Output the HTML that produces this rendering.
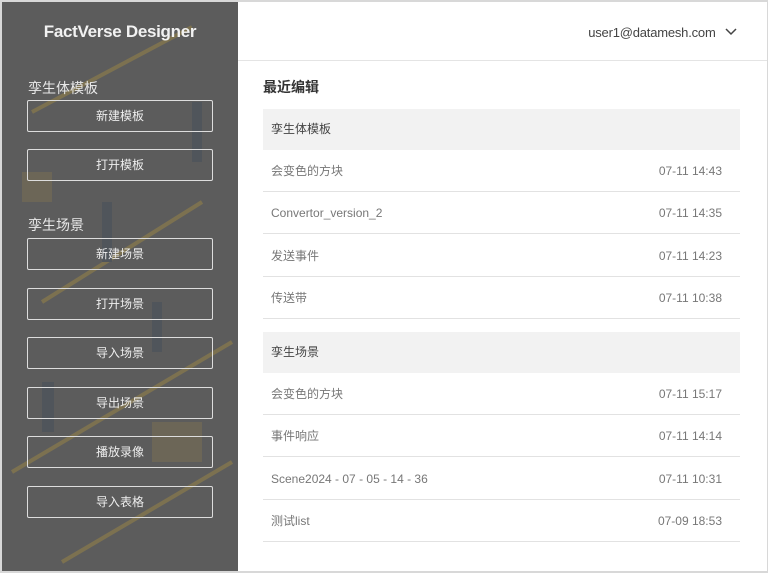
<!DOCTYPE html>
<html><head><meta charset="utf-8"><style>
*{margin:0;padding:0;box-sizing:border-box}
body{width:768px;height:573px;background:#fff;font-family:"Liberation Sans","Noto Sans CJK SC",sans-serif;position:relative;overflow:hidden}
.frame{position:absolute;left:0;top:0;width:768px;height:573px;border:2px solid #d8d8d8;border-right-width:1px}
.side{position:absolute;left:2px;top:2px;width:236px;height:569px;background:#5c5c5c;overflow:hidden}
.side svg{position:absolute;left:0;top:0}
.title{position:absolute;left:0;width:236px;top:20px;text-align:center;color:#f2f2f2;font-size:17px;font-weight:bold;letter-spacing:-0.3px}
.lbl{position:absolute;left:26px;color:#e8e8e8;font-size:14px}
.btn{position:absolute;left:25px;width:186px;height:32px;border:1.5px solid #ddd;border-radius:2px;color:#eee;font-size:12px;text-align:center;line-height:31px}
.top{position:absolute;left:238px;top:2px;right:1px;height:59px;border-bottom:1px solid #e4e4e4}
.user{position:absolute;right:30px;top:23px;font-size:13px;color:#444;letter-spacing:-0.2px}
.h{position:absolute;left:263px;top:77px;font-size:14px;font-weight:bold;color:#333}
.sec{position:absolute;left:263px;width:477px;height:41px;background:#f2f2f2;font-size:12px;color:#444;padding-left:8px;line-height:41px}
.row{position:absolute;left:263px;width:477px;height:42px;border-bottom:1px solid #e2e2e2;font-size:12px;color:#777;line-height:42px;padding:0 18px 0 8px}
.row span{float:right}
</style></head><body>
<div class="frame"></div>
<div class="side">
<svg width="236" height="569" opacity="0.35">
<g fill="none" stroke="#b89a3a" stroke-width="4">
<path d="M30 110 L190 25 M40 300 L200 200 M10 470 L230 340 M60 560 L230 460"/>
</g>
<g fill="#3a4a5a"><rect x="190" y="100" width="10" height="60"/><rect x="100" y="200" width="10" height="60"/><rect x="40" y="380" width="12" height="50"/><rect x="150" y="300" width="10" height="50"/></g>
<g fill="#8a7a50"><rect x="150" y="420" width="50" height="40"/><rect x="20" y="170" width="30" height="30"/></g>
</svg>
<div class="title">FactVerse Designer</div>
<div class="lbl" style="top:76px">孪生体模板</div>
<div class="lbl" style="top:213px">孪生场景</div>
<div class="btn" style="top:98px">新建模板</div>
<div class="btn" style="top:147px">打开模板</div>
<div class="btn" style="top:236px">新建场景</div>
<div class="btn" style="top:286px">打开场景</div>
<div class="btn" style="top:335px">导入场景</div>
<div class="btn" style="top:385px">导出场景</div>
<div class="btn" style="top:434px">播放录像</div>
<div class="btn" style="top:484px">导入表格</div>
</div>
<div class="top"><div class="user">user1@datamesh.com <svg width="12" height="10" style="margin-left:6px" viewBox="0 0 12 10"><path d="M1 2 L6 7 L11 2" fill="none" stroke="#444" stroke-width="1.5"/></svg></div></div>
<div class="h">最近编辑</div>
<div class="sec" style="top:109px">孪生体模板</div>
<div class="row" style="top:150px">会变色的方块<span>07-11 14:43</span></div>
<div class="row" style="top:192px">Convertor_version_2<span>07-11 14:35</span></div>
<div class="row" style="top:235px">发送事件<span>07-11 14:23</span></div>
<div class="row" style="top:277px">传送带<span>07-11 10:38</span></div>
<div class="sec" style="top:332px">孪生场景</div>
<div class="row" style="top:373px">会变色的方块<span>07-11 15:17</span></div>
<div class="row" style="top:415px">事件响应<span>07-11 14:14</span></div>
<div class="row" style="top:458px">Scene2024 - 07 - 05 - 14 - 36<span>07-11 10:31</span></div>
<div class="row" style="top:500px">测试list<span>07-09 18:53</span></div>
</body></html>
